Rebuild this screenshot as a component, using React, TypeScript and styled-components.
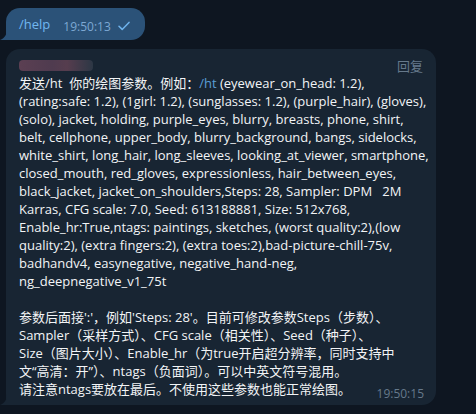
import React from 'react';
import styled, { createGlobalStyle } from 'styled-components';

const GlobalStyle = createGlobalStyle`
  html, body {
    margin: 0;
    padding: 0;
    background: #0e1621;
  }
`;

const Page = styled.div`
  width: 476px;
  height: 414px;
  box-sizing: border-box;
  padding: 8px 0 0 6px;
  display: flex;
  flex-direction: column;
  gap: 9px;
  background: #0e1621;
  font-family: 'Open Sans', 'Noto Sans CJK SC', sans-serif;
  font-size: 13px;
  overflow: hidden;
`;

const Bubble = styled.div<{ $out?: boolean }>`
  position: relative;
  box-sizing: border-box;
  background: ${(p) => (p.$out ? '#2b5278' : '#182533')};
  border-radius: 14px 14px 14px 0;
`;

const Tail = styled.svg`
  position: absolute;
  left: -6px;
  bottom: 0;
`;

const OutBubble = styled(Bubble)`
  width: 139px;
  height: 32px;
  display: flex;
  align-items: center;
  padding: 0 0 0 13px;
`;

const Command = styled.span`
  color: #71b7f0;
  line-height: 18px;
`;

const OutMeta = styled.span`
  display: flex;
  align-items: center;
  gap: 7px;
  margin: 4px 0 0 13px;
  color: #7da8d3;
  font-size: 12px;
`;

const InBubble = styled(Bubble)`
  width: 430px;
  padding: 8px 12px 7px 13px;
  color: #f2f4f6;
  line-height: 18px;
`;

const Header = styled.div`
  display: flex;
  justify-content: space-between;
  align-items: center;
  height: 17px;
`;

const HiddenName = styled.div`
  width: 74px;
  height: 11px;
  border-radius: 4px;
  background: linear-gradient(90deg, #5b3f52 0%, #4f3b4f 45%, #563d4e 65%, #2c3745 100%);
  filter: blur(0.6px);
`;

const Reply = styled.span`
  color: #66798b;
  margin-right: 1px;
`;

const Line = styled.div`
  white-space: pre;
`;

const Link = styled.span`
  color: #5a9ed6;
`;

const LastLine = styled.div`
  display: flex;
  justify-content: space-between;
  white-space: pre;
`;

const InTime = styled.span`
  color: #66798b;
  font-size: 12px;
  align-self: flex-end;
  margin-bottom: -5px;
`;

const Check = () => (
  <svg width="12" height="10" viewBox="0 0 12 10">
    <path d="M1 5.2 L4.2 8.4 L11 1.4" fill="none" stroke="#6fb3ec" strokeWidth="1.5" strokeLinecap="round" strokeLinejoin="round" />
  </svg>
);

const BubbleTail = ({ color }: { color: string }) => (
  <Tail width="7" height="11" viewBox="0 0 7 11">
    <path d="M7 0 C7 5 5 9 0 11 L7 11 Z" fill={color} />
  </Tail>
);

const lines = [
  'Sampler（采样方式）、CFG scale（相关性）、Seed（种子）、',
  'Size（图片大小）、Enable_hr（为true开启超分辨率，同时支持中',
  '文“高清：开”）、ntags（负面词）。可以中英文符号混用。',
];

const prompt = [
  '(rating:safe: 1.2), (1girl: 1.2), (sunglasses: 1.2), (purple_hair), (gloves),',
  '(solo), jacket, holding, purple_eyes, blurry, breasts, phone, shirt,',
  'belt, cellphone, upper_body, blurry_background, bangs, sidelocks,',
  'white_shirt, long_hair, long_sleeves, looking_at_viewer, smartphone,',
  'closed_mouth, red_gloves, expressionless, hair_between_eyes,',
  'black_jacket, jacket_on_shoulders,Steps: 28, Sampler: DPM   2M',
  'Karras, CFG scale: 7.0, Seed: 613188881, Size: 512x768,',
  'Enable_hr:True,ntags: paintings, sketches, (worst quality:2),(low',
  'quality:2), (extra fingers:2), (extra toes:2),bad-picture-chill-75v,',
  'badhandv4, easynegative, negative_hand-neg,',
  'ng_deepnegative_v1_75t',
];

export default function App() {
  return (
    <>
      <GlobalStyle />
      <Page>
        <OutBubble $out>
          <BubbleTail color="#2b5278" />
          <Command>/help</Command>
          <OutMeta>
            19:50:13
            <Check />
          </OutMeta>
        </OutBubble>

        <InBubble>
          <BubbleTail color="#182533" />
          <Header>
            <HiddenName />
            <Reply>回复</Reply>
          </Header>
          <Line>
            发送/ht&nbsp; 你的绘图参数。例如：<Link>/ht</Link> (eyewear_on_head: 1.2),
          </Line>
          {prompt.map((l) => (
            <Line key={l}>{l}</Line>
          ))}
          <Line> </Line>
          <Line>参数后面接':'，例如'Steps: 28'。目前可修改参数Steps（步数）、</Line>
          {lines.map((l) => (
            <Line key={l}>{l}</Line>
          ))}
          <LastLine>
            <span>请注意ntags要放在最后。不使用这些参数也能正常绘图。</span>
            <InTime>19:50:15</InTime>
          </LastLine>
        </InBubble>
      </Page>
    </>
  );
}
